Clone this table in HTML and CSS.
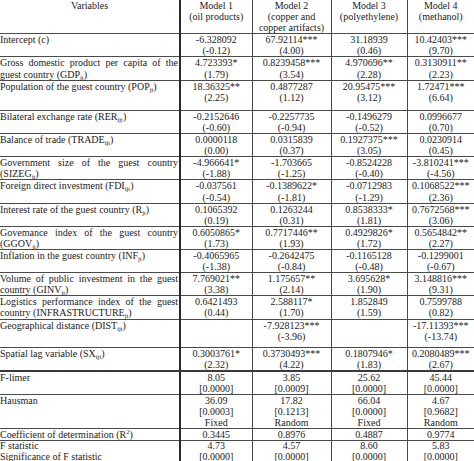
FILE: index.html
```html
<!DOCTYPE html>
<html>
<head>
<meta charset="utf-8">
<link rel="stylesheet" href="styles.css">
</head>
<body>
<table class="results">
<colgroup>
<col class="c-var"><col class="c-m1"><col class="c-m2"><col class="c-m3"><col class="c-m4">
</colgroup>
<thead>
<tr>
<th class="var-head">Variables</th>
<th>Model 1<br>(oil products)</th>
<th>Model 2<br>(copper and<br>copper artifacts)</th>
<th>Model 3<br>(polyethylene)</th>
<th>Model 4<br>(methanol)</th>
</tr>
</thead>
<tbody>
<tr><td class="var">Intercept (c)</td><td>-6.328092<br>(-0.12)</td><td>67.92114***<br>(4.00)</td><td>31.18939<br>(0.46)</td><td>10.42403***<br>(9.70)</td></tr>
<tr><td class="var">Gross domestic product per capita of the guest country (GDP<sub>jt</sub>)</td><td>4.723393*<br>(1.79)</td><td>0.8239458***<br>(3.54)</td><td>4.970696**<br>(2.28)</td><td>0.3130911**<br>(2.23)</td></tr>
<tr class="tall"><td class="var">Population of the guest country (POP<sub>jt</sub>)</td><td>18.36325**<br>(2.25)</td><td>0.4877287<br>(1.12)</td><td>20.95475***<br>(3.12)</td><td>1.72471***<br>(6.64)</td></tr>
<tr><td class="var">Bilateral exchange rate (RER<sub>ijt</sub>)</td><td>-0.2152646<br>(-0.60)</td><td>-0.2257735<br>(-0.94)</td><td>-0.1496279<br>(-0.52)</td><td>0.0996677<br>(0.70)</td></tr>
<tr><td class="var">Balance of trade (TRADE<sub>ijt</sub>)</td><td>0.0000118<br>(0.00)</td><td>0.0315839<br>(0.37)</td><td>0.1927375***<br>(3.05)</td><td>0.0230914<br>(0.45)</td></tr>
<tr><td class="var">Government size of the guest country (SIZEG<sub>jt</sub>)</td><td>-4.966641*<br>(-1.88)</td><td>-1.703665<br>(-1.25)</td><td>-0.8524228<br>(-0.40)</td><td>-3.810241***<br>(-4.56)</td></tr>
<tr><td class="var">Foreign direct investment (FDI<sub>ijt</sub>)</td><td>-0.037561<br>(-0.54)</td><td>-0.1389622*<br>(-1.81)</td><td>-0.0712983<br>(-1.29)</td><td>0.1068522***<br>(2.36)</td></tr>
<tr><td class="var">Interest rate of the guest country (R<sub>jt</sub>)</td><td>0.1065392<br>(0.19)</td><td>0.1263244<br>(0.31)</td><td>0.8538333*<br>(1.81)</td><td>0.7672568***<br>(3.06)</td></tr>
<tr><td class="var">Govemance index of the guest country (GGOV<sub>jt</sub>)</td><td>0.6050865*<br>(1.73)</td><td>0.7717446**<br>(1.93)</td><td>0.4929826*<br>(1.72)</td><td>0.5654842**<br>(2.27)</td></tr>
<tr><td class="var">Inflation in the guest country (INF<sub>jt</sub>)</td><td>-0.4065965<br>(-1.38)</td><td>-0.2642475<br>(-0.84)</td><td>-0.1165128<br>(-0.48)</td><td>-0.1299001<br>(-0.67)</td></tr>
<tr><td class="var">Volume of public investment in the guest country (GINV<sub>jt</sub>)</td><td>7.769021**<br>(3.38)</td><td>1.175657**<br>(2.14)</td><td>3.695628*<br>(1.90)</td><td>3.148816***<br>(9.31)</td></tr>
<tr><td class="var">Logistics performance index of the guest country (INFRASTRUCTURE<sub>jt</sub>)</td><td>0.6421493<br>(0.44)</td><td>2.588117*<br>(1.70)</td><td>1.852849<br>(1.59)</td><td>0.7599788<br>(0.82)</td></tr>
<tr class="mid"><td class="var">Geographical distance (DIST<sub>ijt</sub>)</td><td></td><td>-7.928123***<br>(-3.96)</td><td></td><td>-17.11393***<br>(-13.74)</td></tr>
<tr class="dbl"><td class="var">Spatial lag variable (SX<sub>ijt</sub>)</td><td>0.3003761*<br>(2.32)</td><td>0.3730493***<br>(4.22)</td><td>0.1807946*<br>(1.83)</td><td>0.2080489***<br>(2.67)</td></tr>
<tr><td class="var">F-limer</td><td>8.05<br>[0.0000]</td><td>3.85<br>[0.0009]</td><td>25.62<br>[0.0000]</td><td>45.44<br>[0.0000]</td></tr>
<tr><td class="var">Hausman</td><td>36.09<br>[0.0003]<br>Fixed</td><td>17.82<br>[0.1213]<br>Random</td><td>66.04<br>[0.0000]<br>Fixed</td><td>4.67<br>[0.9682]<br>Random</td></tr>
<tr><td class="var">Coefficient of determination (R<sup>2</sup>)</td><td>0.3445</td><td>0.8976</td><td>0.4887</td><td>0.9774</td></tr>
<tr class="nob"><td class="var">F statistic</td><td>4.73</td><td>4.57</td><td>8.60</td><td>5.83</td></tr>
<tr class="nob"><td class="var">Significance of F statistic</td><td>[0.0000]</td><td>[0.0000]</td><td>[0.0000]</td><td>[0.0000]</td></tr>
</tbody>
</table>
</body>
</html>
```

FILE: styles.css
```css
html, body {
  margin: 0;
  padding: 0;
  background: #ffffff;
  overflow: hidden;
}

.results {
  width: 474px;
  table-layout: fixed;
  border-collapse: collapse;
  font-family: "Liberation Serif", "Times New Roman", serif;
  font-size: 10px;
  line-height: 11.1px;
  color: #222222;
}

.c-var { width: 180px; }
.c-m1 { width: 72px; }
.c-m2 { width: 79px; }
.c-m3 { width: 76px; }
.c-m4 { width: 67px; }

.results th,
.results td {
  padding: 0 1px;
  vertical-align: top;
  text-align: center;
  font-weight: normal;
  border-bottom: 1px solid #4a4a4a;
  border-left: 1px solid #4a4a4a;
  white-space: nowrap;
}

.results th:first-child,
.results td:first-child {
  border-left: none;
  border-right: 2px solid #2a2a2a;
}

.results td.var {
  text-align: justify;
  white-space: normal;
  padding: 0 1px 0 0;
}

.results th.var-head {
  text-align: center;
}

.results tr.tall td {
  padding-bottom: 7px;
}

.results tr.mid td {
  padding-bottom: 5px;
}

.results tr.dbl td {
  border-bottom: 2px solid #3a3a3a;
}

.results tr.nob td {
  border-bottom: none;
  line-height: 10.6px;
}

sub {
  font-size: 6.5px;
  line-height: 0;
  vertical-align: -2px;
}

sup {
  font-size: 6.5px;
  line-height: 0;
  vertical-align: 4px;
}
```
